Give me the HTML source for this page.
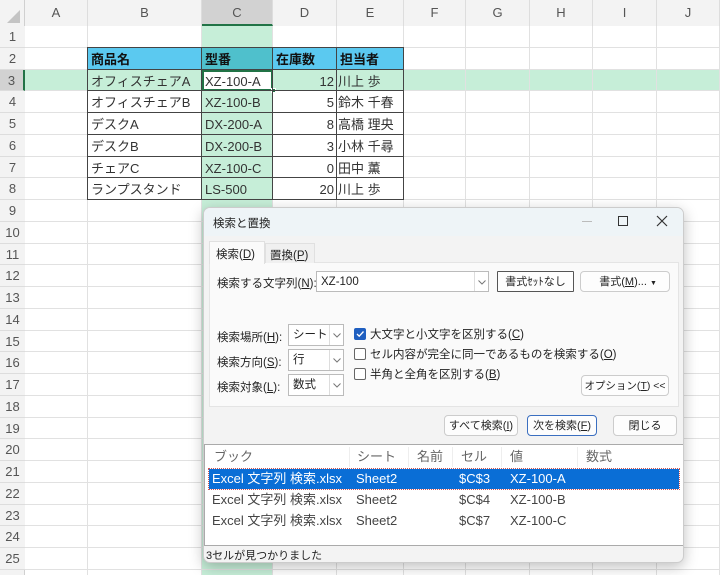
<!DOCTYPE html>
<html><head><meta charset="utf-8"><style>
*{box-sizing:border-box;margin:0;padding:0}
body{width:720px;height:575px;overflow:hidden;background:#fff;font-family:"Liberation Sans","Noto Sans CJK JP",sans-serif;font-size:13px;color:#222;position:relative}
.a{position:absolute}
.hd{background:#f3f3f3;color:#555;text-align:center;font-size:13px}
.cell{position:absolute;font-size:13px;line-height:21px;padding:0 3px;white-space:nowrap;color:#333}
.dlg{position:absolute;left:203px;top:207px;width:481px;height:356px;background:#f3f3f3;border:1px solid #ccc;border-radius:7px;box-shadow:0 4px 14px rgba(0,0,0,.25);overflow:hidden;font-size:11.5px;color:#222}
.btn{position:absolute;background:#fdfdfd;border:1px solid #ccc;border-radius:4px;text-align:center;font-size:11px;line-height:20px;white-space:nowrap}
.combo{position:absolute;background:#fff;border:1px solid #bbb;font-size:11.5px;line-height:20px;padding-left:4px;white-space:nowrap;overflow:hidden}
.combo i{position:absolute;right:0;top:0;width:14px;height:100%;border-left:1px solid #ddd;background:#fff}
.combo i svg{position:absolute;left:3px;top:50%;margin-top:-2px}
.cb{position:absolute;width:12px;height:12px;border:1px solid #666;border-radius:2px;background:#fff}
.lbl{position:absolute;font-size:11.5px;white-space:nowrap}
u{text-decoration:underline}
.row{position:absolute;left:5px;width:470px;height:20px;line-height:20px;font-size:13px;color:#444}
.row span{position:absolute}
</style></head><body>
<div id="g"></div>
<div class="dlg">
 <div class="a" style="left:0;top:0;width:481px;height:28px;background:#eef4f7"></div>
 <div class="lbl" style="left:9px;top:7px">検索と置換</div>
 <div class="a" style="left:378px;top:13px;width:10px;height:1px;background:#bbb"></div>
 <div class="a" style="left:414px;top:8px;width:10px;height:10px;border:1px solid #333"></div>
 <svg class="a" style="left:452px;top:7px" width="12" height="12"><path d="M1 1L11 11M11 1L1 11" stroke="#333" stroke-width="1.2"/></svg>
 <div class="a" style="left:5px;top:54px;width:470px;height:145px;background:#fafafa;border:1px solid #e4e4e4"></div>
 <div class="a" style="left:5px;top:33px;width:56px;height:23px;background:#fafafa;border:1px solid #e0e0e0;border-bottom:none"></div>
 <div class="lbl" style="left:12px;top:38px">検索(<u>D</u>)</div>
 <div class="a" style="left:61px;top:35px;width:50px;height:20px;background:#f0f0f0;border:1px solid #e0e0e0;border-bottom:none"></div>
 <div class="lbl" style="left:66px;top:39px">置換(<u>P</u>)</div>
 <div class="lbl" style="left:13px;top:67px">検索する文字列(<u>N</u>):</div>
 <div class="combo" style="left:112px;top:63px;width:173px;height:21px">XZ-100<i><svg width="8" height="5"><path d="M0.5 0.5L4 4L7.5 0.5" fill="none" stroke="#777"/></svg></i></div>
 <div class="btn" style="left:293px;top:63px;width:77px;height:21px;border:1px solid #555;border-radius:1px">書式ｾｯﾄなし</div>
 <div class="btn" style="left:376px;top:63px;width:90px;height:21px">&nbsp;&nbsp;書式(<u>M</u>)... <span style="font-size:7px">▼</span></div>
 <div class="lbl" style="left:13px;top:121px">検索場所(<u>H</u>):</div>
 <div class="lbl" style="left:13px;top:146px">検索方向(<u>S</u>):</div>
 <div class="lbl" style="left:13px;top:171px">検索対象(<u>L</u>):</div>
 <div class="combo" style="left:84px;top:116px;width:56px;height:22px">シート<i><svg width="8" height="5"><path d="M0.5 0.5L4 4L7.5 0.5" fill="none" stroke="#777"/></svg></i></div>
 <div class="combo" style="left:84px;top:141px;width:56px;height:22px">行<i><svg width="8" height="5"><path d="M0.5 0.5L4 4L7.5 0.5" fill="none" stroke="#777"/></svg></i></div>
 <div class="combo" style="left:84px;top:166px;width:56px;height:22px">数式<i><svg width="8" height="5"><path d="M0.5 0.5L4 4L7.5 0.5" fill="none" stroke="#777"/></svg></i></div>
 <div class="cb" style="left:150px;top:120px;background:#1f5fc0;border-color:#1f5fc0"><svg width="10" height="10" style="position:absolute;left:0;top:0"><path d="M2 5L4.2 7.2L8.5 2.5" fill="none" stroke="#fff" stroke-width="1.3"/></svg></div>
 <div class="lbl" style="left:166px;top:118px">大文字と小文字を区別する(<u>C</u>)</div>
 <div class="cb" style="left:150px;top:140px"></div>
 <div class="lbl" style="left:166px;top:138px">セル内容が完全に同一であるものを検索する(<u>O</u>)</div>
 <div class="cb" style="left:150px;top:160px"></div>
 <div class="lbl" style="left:166px;top:158px">半角と全角を区別する(<u>B</u>)</div>
 <div class="btn" style="left:377px;top:167px;width:88px;height:21px;font-size:10.5px">オプション(<u>T</u>) &lt;&lt;</div>
 <div class="btn" style="left:240px;top:207px;width:74px;height:21px">すべて検索(<u>I</u>)</div>
 <div class="btn" style="left:323px;top:207px;width:70px;height:21px;border:1.5px solid #3b6fc0">次を検索(<u>F</u>)</div>
 <div class="btn" style="left:409px;top:207px;width:64px;height:21px">閉じる</div>
 <div class="a" style="left:0;top:236px;width:481px;height:102px;background:#fff;border:1px solid #aaa"></div>
 <div class="row" style="top:239px;color:#666"><span style="left:5px">ブック</span><span style="left:148px">シート</span><span style="left:208px">名前</span><span style="left:252px">セル</span><span style="left:301px">値</span><span style="left:377px">数式</span></div>
 <div class="a" style="left:145px;top:239px;width:1px;height:20px;background:#eee"></div>
 <div class="a" style="left:204px;top:239px;width:1px;height:20px;background:#eee"></div>
 <div class="a" style="left:248px;top:239px;width:1px;height:20px;background:#eee"></div>
 <div class="a" style="left:297px;top:239px;width:1px;height:20px;background:#eee"></div>
 <div class="a" style="left:373px;top:239px;width:1px;height:20px;background:#eee"></div>
 <div class="row" style="top:261px;background:#0a6ed6;color:#fff;outline:1px dotted #c55"><span style="left:3px">Excel 文字列 検索.xlsx</span><span style="left:147px">Sheet2</span><span style="left:250px">$C$3</span><span style="left:301px">XZ-100-A</span></div>
 <div class="row" style="top:282px"><span style="left:3px">Excel 文字列 検索.xlsx</span><span style="left:147px">Sheet2</span><span style="left:250px">$C$4</span><span style="left:301px">XZ-100-B</span></div>
 <div class="row" style="top:303px"><span style="left:3px">Excel 文字列 検索.xlsx</span><span style="left:147px">Sheet2</span><span style="left:250px">$C$7</span><span style="left:301px">XZ-100-C</span></div>
 <div class="lbl" style="left:2px;top:339px;font-size:11px">3セルが見つかりました</div>
</div>
<script>
var cols=[25,88,202,273,337,404,466,530,593,657,720],names="ABCDEFGHIJ";
var h='',top0=26,rh=21.75;
function rt(n){return top0+(n-1)*rh}
h+='<div class="a" style="left:202px;top:26px;width:71px;height:549px;background:#c6eed8"></div>';
h+='<div class="a" style="left:25px;top:'+rt(3)+'px;width:695px;height:'+rh+'px;background:#c6eed8"></div>';
for(var i=0;i<cols.length;i++)h+='<div class="a" style="left:'+(cols[i]-1)+'px;top:0;width:1px;height:575px;background:#e1e1e1"></div>';
for(var r=1;r<=26;r++)h+='<div class="a" style="left:0;top:'+(Math.round(rt(r))-1)+'px;width:720px;height:1px;background:#e1e1e1"></div>';
h+='<div class="a hd" style="left:0;top:0;width:720px;height:26px;border-bottom:1px solid #d0d0d0"></div>';
h+='<div class="a hd" style="left:0;top:0;width:25px;height:575px;border-right:1px solid #d0d0d0"></div>';
h+='<div class="a" style="left:7px;top:10px;width:0;height:0;border-left:13px solid transparent;border-bottom:13px solid #c4c4c4"></div>';
for(var i=0;i<10;i++){var bg=i==2?'background:#d2d2d2;border-bottom:2px solid #217346;':'';h+='<div class="a hd" style="left:'+cols[i]+'px;top:0;width:'+(cols[i+1]-cols[i])+'px;height:26px;line-height:26px;border-right:1px solid #ddd;'+bg+'">'+names[i]+'</div>';}
for(var r=1;r<=25;r++){var bg=r==3?'background:#d2d2d2;border-right:2px solid #217346;':'';h+='<div class="a hd" style="left:0;top:'+rt(r)+'px;width:25px;height:'+rh+'px;line-height:'+rh+'px;border-bottom:1px solid #ddd;'+bg+'">'+r+'</div>';}
var hx=[88,202,273,337,404];
for(var i=0;i<4;i++)h+='<div class="a" style="left:'+hx[i]+'px;top:'+rt(2)+'px;width:'+(hx[i+1]-hx[i])+'px;height:'+rh+'px;background:'+(i==1?'#4fc0cc':'#5bc9f0')+'"></div>';
var hdr=['商品名','型番','在庫数','担当者'];
for(var i=0;i<4;i++)h+='<div class="cell" style="left:'+hx[i]+'px;top:'+(rt(2)+1)+'px;font-weight:bold;color:#111">'+hdr[i]+'</div>';
h+='<div class="a" style="left:202px;top:'+rt(3)+'px;width:71px;height:'+rh+'px;background:#fff;border:2px solid #217346"></div>';
h+='<div class="a" style="left:271px;top:'+(rt(4)-3)+'px;width:5px;height:5px;background:#217346;border:1px solid #fff"></div>';
var d=[['オフィスチェアA','XZ-100-A','12','川上 歩'],['オフィスチェアB','XZ-100-B','5','鈴木 千春'],['デスクA','DX-200-A','8','高橋 理央'],['デスクB','DX-200-B','3','小林 千尋'],['チェアC','XZ-100-C','0','田中 薫'],['ランプスタンド','LS-500','20','川上 歩']];
for(var r=0;r<6;r++){var t=rt(r+3)+1;
h+='<div class="cell" style="left:88px;top:'+t+'px">'+d[r][0]+'</div>';
h+='<div class="cell" style="left:202px;top:'+t+'px">'+d[r][1]+'</div>';
h+='<div class="cell" style="left:273px;top:'+t+'px;width:64px;text-align:right">'+d[r][2]+'</div>';
h+='<div class="cell" style="left:337px;top:'+t+'px;padding-left:1px">'+d[r][3]+'</div>';}
for(var r=2;r<=9;r++)h+='<div class="a" style="left:88px;top:'+(Math.round(rt(r))-1)+'px;width:316px;height:1px;background:#444"></div>';
for(var i=0;i<5;i++)h+='<div class="a" style="left:'+(hx[i]-1)+'px;top:'+(rt(2)-1)+'px;width:1px;height:'+(rh*7+1)+'px;background:#444"></div>';
document.getElementById('g').innerHTML=h;
</script>
</body></html>
